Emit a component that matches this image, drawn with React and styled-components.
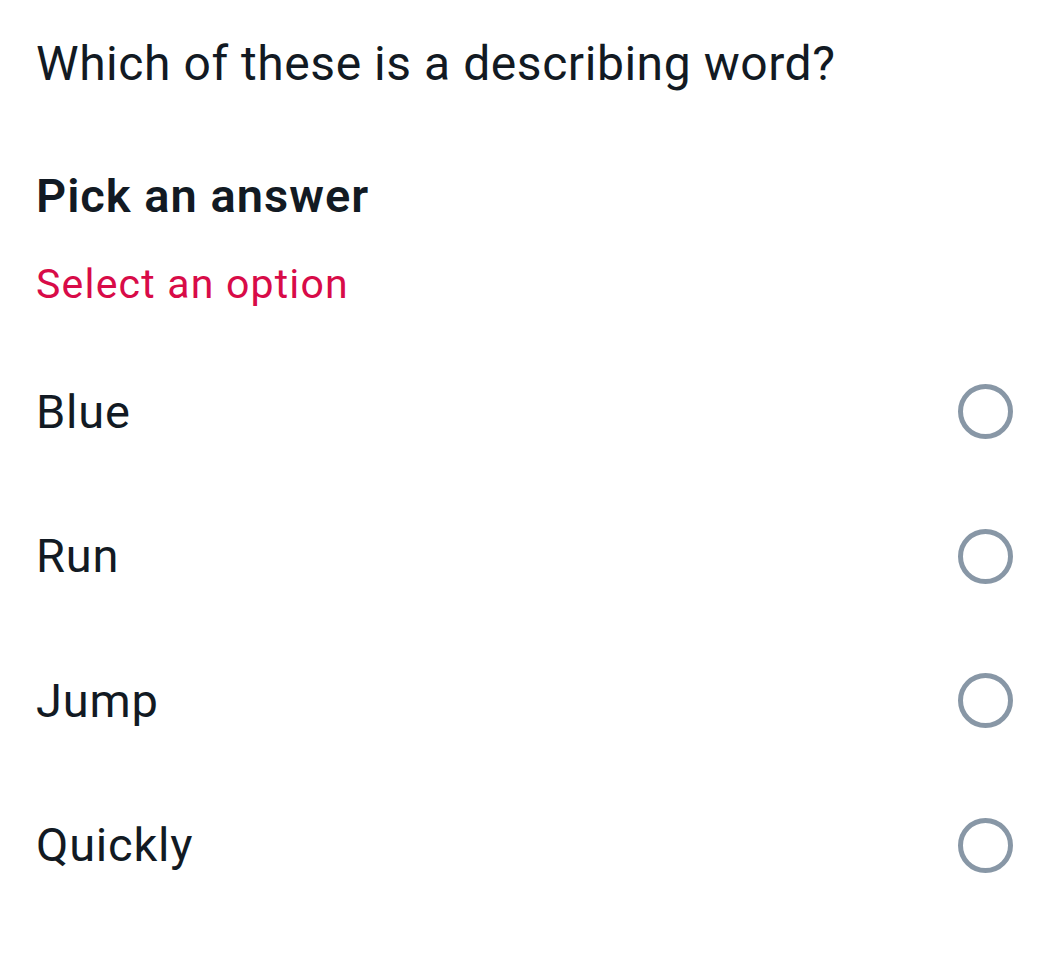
import styled, { createGlobalStyle } from "styled-components";

const GlobalStyle = createGlobalStyle`
	body {
		margin: 0;
		background: #ffffff;
		font-family: Roboto, "Noto Sans", sans-serif;
		color: #121a23;
	}
`;

const options = ["Blue", "Run", "Jump", "Quickly"];

const App = () => {
	return (
		<>
			<GlobalStyle />
			<Page>
				<Question>Which of these is a describing word?</Question>
				<Fieldset>
					<Legend>Pick an answer</Legend>
					<ErrorText>Select an option</ErrorText>
					<OptionList>
						{options.map((label) => (
							<OptionRow key={label}>
								<OptionLabel>{label}</OptionLabel>
								<Radio type="radio" name="answer" value={label} />
							</OptionRow>
						))}
					</OptionList>
				</Fieldset>
			</Page>
		</>
	);
};

export default App;

//#region Declarations
const Page = styled.div`
	padding: 36px 39px 0 36px;
`;

const Question = styled.h1`
	margin: 0;
	font-size: 48px;
	line-height: 56px;
	font-weight: 400;
	letter-spacing: 0.55px;
`;

const Fieldset = styled.div`
	margin-top: 75.5px;
`;

const Legend = styled.h2`
	margin: 0;
	font-size: 47px;
	line-height: 56px;
	font-weight: 600;
	letter-spacing: 1px;
`;

const ErrorText = styled.p`
	margin: 36px 0 0;
	font-size: 41px;
	line-height: 48px;
	letter-spacing: 1.2px;
	color: #d80b48;
`;

const OptionList = styled.div`
	margin-top: 32px;
	display: flex;
	flex-direction: column;
`;

const OptionRow = styled.label`
	display: flex;
	align-items: center;
	justify-content: space-between;
	height: 144.5px;
`;

const OptionLabel = styled.span`
	font-size: 47px;
	line-height: 56px;
	letter-spacing: 0.8px;
`;

const Radio = styled.input`
	appearance: none;
	margin: 0;
	width: 55px;
	height: 55px;
	border-radius: 50%;
	border: 5px solid #8897a6;
	background: #ffffff;
	box-sizing: border-box;
`;
//#endregion
